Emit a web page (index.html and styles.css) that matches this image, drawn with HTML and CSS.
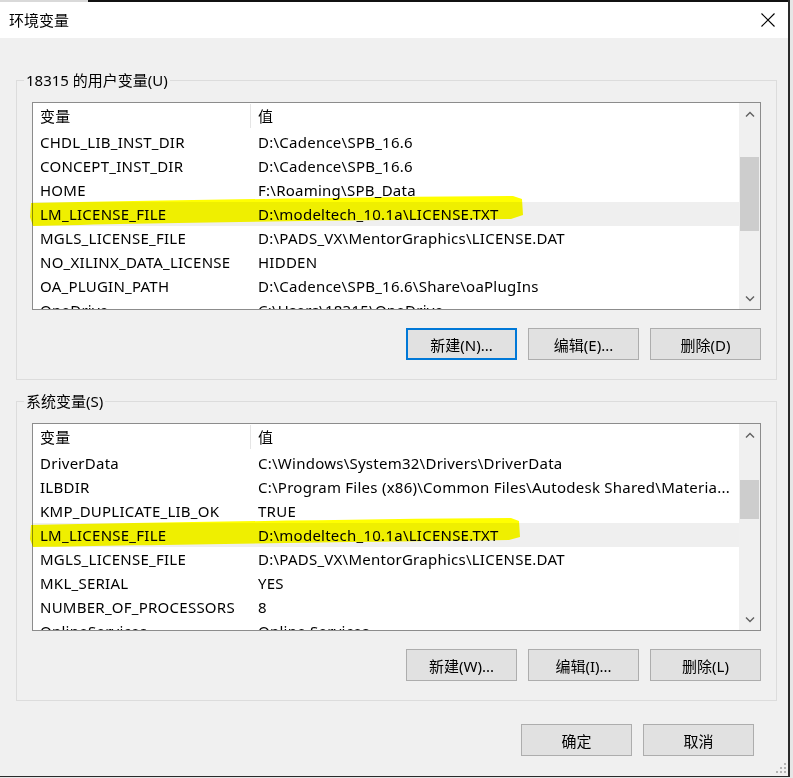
FILE: index.html
```html
<!DOCTYPE html>
<html lang="zh-CN">
<head>
    <meta charset="UTF-8">
    <title>环境变量</title>
    <link rel="stylesheet" href="styles.css">
</head>
<body>
    <div class="window">
        <div class="topline"></div>
        <div class="titlebar">
            <span class="title">环境变量</span>
            <svg class="close" width="14" height="14" viewBox="0 0 14 14">
                <path d="M0.5 0.5 L13.5 13.5 M13.5 0.5 L0.5 13.5" stroke="#000" stroke-width="1.1" fill="none"/>
            </svg>
        </div>
        <div class="content">
            <fieldset class="group group-user">
                <legend>18315 的用户变量(U)</legend>
                <div class="list-wrap">
                    <div class="list">
                        <div class="list-body">
                            <div class="row head"><span>变量</span><span class="sep">值</span></div>
                            <div class="row"><span>CHDL_LIB_INST_DIR</span><span>D:\Cadence\SPB_16.6</span></div>
                            <div class="row"><span>CONCEPT_INST_DIR</span><span>D:\Cadence\SPB_16.6</span></div>
                            <div class="row"><span>HOME</span><span>F:\Roaming\SPB_Data</span></div>
                            <div class="row hover"><span>LM_LICENSE_FILE</span><span>D:\modeltech_10.1a\LICENSE.TXT</span></div>
                            <div class="row"><span>MGLS_LICENSE_FILE</span><span>D:\PADS_VX\MentorGraphics\LICENSE.DAT</span></div>
                            <div class="row"><span>NO_XILINX_DATA_LICENSE</span><span>HIDDEN</span></div>
                            <div class="row"><span>OA_PLUGIN_PATH</span><span>D:\Cadence\SPB_16.6\Share\oaPlugIns</span></div>
                            <div class="row"><span>OneDrive</span><span>C:\Users\18315\OneDrive</span></div>
                        </div>
                        <div class="scrollbar">
                            <div class="arrow">
                                <svg width="10" height="6" viewBox="0 0 10 6"><path d="M1 5.5 L5 1.5 L9 5.5" stroke="#606060" stroke-width="1.4" fill="none"/></svg>
                            </div>
                            <div class="track"><div class="thumb" style="margin-top:33px;height:74px"></div></div>
                            <div class="arrow">
                                <svg width="10" height="6" viewBox="0 0 10 6"><path d="M1 0.5 L5 4.5 L9 0.5" stroke="#606060" stroke-width="1.4" fill="none"/></svg>
                            </div>
                        </div>
                    </div>
                    <svg class="marker marker-user" width="496" height="32" viewBox="0 0 496 32">
                        <path d="M2 8 C120 6 320 2 484 1 L493 4 L494 20 L482 24 C320 25 120 28 4 31 L1 22 Z" fill="#ffff00"/>
                    </svg>
                </div>
                <div class="buttons">
                    <button class="btn focused">新建(N)...</button>
                    <button class="btn">编辑(E)...</button>
                    <button class="btn">删除(D)</button>
                </div>
            </fieldset>

            <fieldset class="group group-system">
                <legend>系统变量(S)</legend>
                <div class="list-wrap">
                    <div class="list">
                        <div class="list-body">
                            <div class="row head"><span>变量</span><span class="sep">值</span></div>
                            <div class="row"><span>DriverData</span><span>C:\Windows\System32\Drivers\DriverData</span></div>
                            <div class="row"><span>ILBDIR</span><span>C:\Program Files (x86)\Common Files\Autodesk Shared\Materia...</span></div>
                            <div class="row"><span>KMP_DUPLICATE_LIB_OK</span><span>TRUE</span></div>
                            <div class="row hover"><span>LM_LICENSE_FILE</span><span>D:\modeltech_10.1a\LICENSE.TXT</span></div>
                            <div class="row"><span>MGLS_LICENSE_FILE</span><span>D:\PADS_VX\MentorGraphics\LICENSE.DAT</span></div>
                            <div class="row"><span>MKL_SERIAL</span><span>YES</span></div>
                            <div class="row"><span>NUMBER_OF_PROCESSORS</span><span>8</span></div>
                            <div class="row"><span>OnlineServices</span><span>Online Services</span></div>
                        </div>
                        <div class="scrollbar">
                            <div class="arrow">
                                <svg width="10" height="6" viewBox="0 0 10 6"><path d="M1 5.5 L5 1.5 L9 5.5" stroke="#606060" stroke-width="1.4" fill="none"/></svg>
                            </div>
                            <div class="track"><div class="thumb" style="margin-top:35px;height:39px"></div></div>
                            <div class="arrow">
                                <svg width="10" height="6" viewBox="0 0 10 6"><path d="M1 0.5 L5 4.5 L9 0.5" stroke="#606060" stroke-width="1.4" fill="none"/></svg>
                            </div>
                        </div>
                    </div>
                    <svg class="marker marker-system" width="496" height="32" viewBox="0 0 496 32">
                        <path d="M2 8 C120 6 320 2 482 1 L490 4 L491 20 L480 23 C320 25 120 28 4 30 L1 22 Z" fill="#ffff00"/>
                    </svg>
                </div>
                <div class="buttons">
                    <button class="btn">新建(W)...</button>
                    <button class="btn">编辑(I)...</button>
                    <button class="btn">删除(L)</button>
                </div>
            </fieldset>

            <div class="footer">
                <button class="btn">确定</button>
                <button class="btn">取消</button>
            </div>
        </div>
        <svg class="grip" width="10" height="10" viewBox="0 0 10 10">
            <rect x="8" y="0" width="2" height="2" fill="#b4b4b4"/>
            <rect x="4" y="4" width="2" height="2" fill="#b4b4b4"/>
            <rect x="8" y="4" width="2" height="2" fill="#b4b4b4"/>
            <rect x="0" y="8" width="2" height="2" fill="#b4b4b4"/>
            <rect x="4" y="8" width="2" height="2" fill="#b4b4b4"/>
            <rect x="8" y="8" width="2" height="2" fill="#b4b4b4"/>
        </svg>
    </div>
</body>
</html>
```

FILE: styles.css
```css
body {
    margin: 0;
    background-color: #e6e6e6;
    font-family: "Noto Sans", "Noto Sans CJK SC", sans-serif;
    font-size: 15px;
    color: #000;
}
.window {
    position: relative;
    width: 788px;
    height: 776px;
    background-color: #f0f0f0;
    border-right: 2px solid #2a2a2a;
    border-bottom: 1px solid #2a2a2a;
    overflow: hidden;
}
.topline {
    height: 2px;
    background: linear-gradient(to right, #d9d9d9 88px, #111 88px);
}
.titlebar {
    height: 36px;
    background-color: #fff;
    display: flex;
    align-items: center;
    justify-content: space-between;
    padding: 0 12px 0 9px;
}
.title {
    font-size: 15px;
    margin-top: -1px;
}
.close {
    margin-right: 1px;
}
.content {
    padding: 0 0 0 16px;
}
.group {
    width: 729px;
    margin: 0;
    padding: 0 15px 19px 15px;
    border: 1px solid #dcdcdc;
    min-width: 0;
}
.group-user {
    margin-top: 32px;
}
.group-system {
    margin-top: 11px;
}
.group legend {
    margin-left: -8px;
    padding: 0 2px;
    line-height: 20px;
}
.list-wrap {
    position: relative;
    margin-top: 12px;
}
.list {
    height: 206px;
    border: 1px solid #8c8c8c;
    background-color: #fff;
    display: flex;
    overflow: hidden;
}
.list-body {
    flex: 1;
    overflow: hidden;
}
.row {
    display: grid;
    grid-template-columns: 217px 1fr;
    height: 24px;
    line-height: 24px;
    white-space: nowrap;
    letter-spacing: 0.25px;
}
.row span {
    padding-left: 7px;
    overflow: hidden;
}
.row span + span {
    padding-left: 8px;
}
.row.head {
    height: 27px;
    line-height: 27px;
}
.row.head .sep {
    border-left: 1px solid #e5e5e5;
    margin: 1px 0 2px 0;
    line-height: 25px;
    padding-left: 7px;
}
.row.hover {
    background-color: #efefef;
}
.scrollbar {
    width: 21px;
    background-color: #f0f0f0;
    display: flex;
    flex-direction: column;
}
.arrow {
    height: 21px;
    display: flex;
    align-items: center;
    justify-content: center;
}
.track {
    flex: 1;
}
.thumb {
    background-color: #cdcdcd;
    margin: 0 1px;
}
.marker {
    position: absolute;
    left: -3px;
    mix-blend-mode: multiply;
    pointer-events: none;
}
.marker-user {
    top: 93px;
}
.marker-system {
    top: 94px;
}
.buttons {
    display: flex;
    justify-content: flex-end;
    gap: 11px;
    margin-top: 18px;
}
.btn {
    width: 111px;
    height: 32px;
    background-color: #e1e1e1;
    border: 1px solid #adadad;
    font-family: inherit;
    font-size: 15px;
    color: #000;
    padding: 0;
}
.btn.focused {
    border: 2px solid #0078d7;
}
.footer {
    display: flex;
    justify-content: flex-end;
    gap: 11px;
    margin-top: 23px;
    padding-right: 34px;
}
.grip {
    position: absolute;
    right: 2px;
    bottom: 3px;
}
```
